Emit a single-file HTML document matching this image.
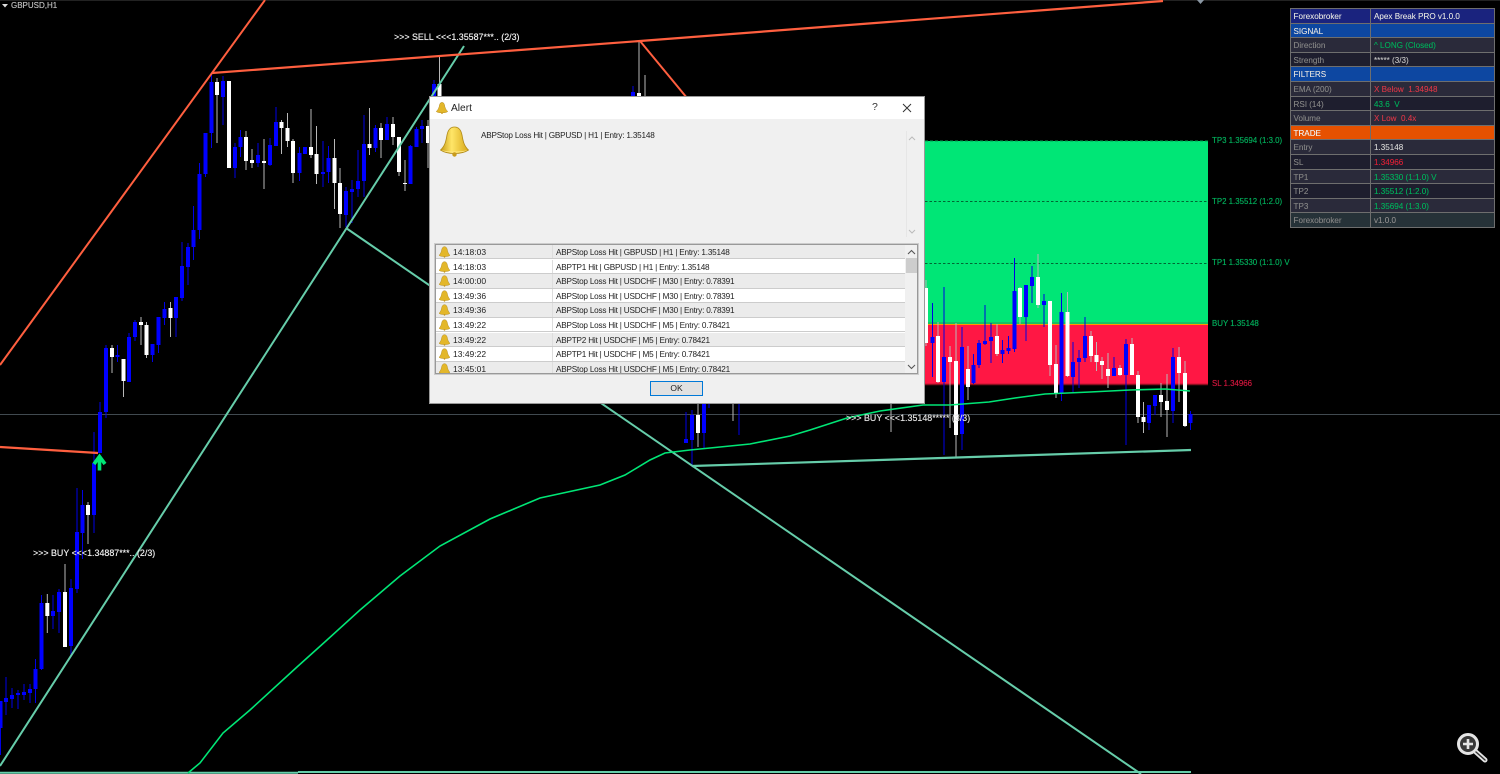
<!DOCTYPE html>
<html><head><meta charset="utf-8"><title>GBPUSD,H1</title>
<style>
html,body{margin:0;padding:0;background:#000;width:1500px;height:774px;overflow:hidden;font-family:"Liberation Sans",sans-serif}
#wrap{position:relative;width:1500px;height:774px;overflow:hidden;filter:blur(.35px)}
.abs{position:absolute;white-space:nowrap}
.lb{position:absolute;white-space:nowrap;font-size:7.9px;line-height:10px;text-shadow:0 0 .4px currentColor}
.lb.w{font-size:8.9px}
.pn{position:absolute;left:1290px;top:8px;width:205px;height:220px;background:#6e6e6e;font-size:8.1px;text-shadow:0 0 .3px currentColor}
.r{position:absolute;left:1px;width:203px;height:13.7px;line-height:15px}
.r b{font-weight:normal;position:absolute;top:0;height:13.7px;padding-left:2.5px;box-sizing:border-box;overflow:hidden}
.r b:first-child{left:0;width:79px}.r b:last-child{left:80px;width:123px;padding-left:3px}
.dlg{position:absolute;left:430px;top:97px;width:494px;height:306px;background:#f0f0f0;box-shadow:0 0 0 1px #999;color:#222}
.ttl{position:absolute;left:0;top:0;width:494px;height:22px;background:#fff}
.list{position:absolute;left:5px;top:147px;width:483px;height:130px;background:#fff;box-sizing:border-box;border:1px solid #999;box-shadow:0 0 0 1px #ccc;overflow:hidden}
.row{position:absolute;left:0;width:469px;height:13.4px;border-bottom:1.2px solid #ccc;font-size:8.5px;line-height:15px}
.row.a{background:#ebebeb}.row.b{background:#fff}
.row i{font-style:normal;position:absolute;left:17px}.row u{text-decoration:none;position:absolute;left:120px;font-size:8.2px;letter-spacing:-.21px}
.row s{position:absolute;left:115.5px;top:0;bottom:0;width:1px;background:#ddd}
.row svg{position:absolute;left:3px;top:1px}
</style></head><body><div id="wrap">
<svg class="abs" style="left:0;top:0" width="1500" height="774" viewBox="0 0 1500 774" fill="none">
<rect x="0" y="0" width="1500" height="1" fill="#222"/>
<rect x="925" y="141" width="283" height="183" fill="#00e676"/>
<rect x="925" y="324" width="283" height="61" fill="#ff1744"/>
<path d="M925 141H1208" stroke="#00a050" stroke-width="1" stroke-dasharray="3 2"/>
<path d="M925 201.5H1208M925 263.5H1208" stroke="#063" stroke-width="1" stroke-dasharray="2.5 2"/>
<path d="M925 323H1208" stroke="#2f9a50" stroke-width="1"/><path d="M925 324.5H1208" stroke="#ff9800" stroke-width="1"/>
<path d="M925 384.5H1208" stroke="#8a1020" stroke-width="1.5"/>
<path d="M0 414.5H1500" stroke="#414a50" stroke-width="1"/>
<path stroke="#0000e6" stroke-width="1" d="M0.5 701V755M6 677V715M12 688V708M18 690V709M24 684V700M30 684V703M35.5 659V703M41.5 595V670M53 595V629M59 589V633M71 579V656M77 488V593M82.5 490V559M94 432V533M100 402V453M106 345V418M117.5 345V362M129 333V382M135 320V341M152.5 344V362M158.5 317V353M164.5 302V325M176 297V337M182 242V301M188 243V285M193.5 206V260M199.5 163V239M205.5 133V177M211.5 73V148M223 76V125M235 143V178M240.5 130V157M258 143V167M270 138V166M276 107V146M299.5 147V181M323 141V187M328.5 146V183M346 187V227M352 180V223M358 150V197M364 115V197M375.5 125V152M387 117V140M410.5 145V184M416.5 127V147M422 120V143M434 80V100M633 86V100M686 412V442M692 410V467M704 403V448M709 403V408M739 403V435M932.5 303V377M944 287V455M962 327V450M973.5 354V384M979 340V368M985 305V345M991 323V363M1002.5 340V363M1008.5 336V354M1014.5 258V352M1026 285V341M1032 266V303M1044 294V327M1061.5 293V401M1073 342V392M1079 350V388M1085 317V362M1114 357V376M1126 339V445M1149 405V430M1155 395V415M1173 348V423M1190.5 411V430"/>
<path stroke="#b8b8b8" stroke-width="1" d="M47.3 594V633M65 564V647M88 502V544M112 345V373M123.5 359V397M141 317V345M146.5 322V358M170.5 302V337M217 78V143M246 131V170M252 149V168M264 139V189M281.5 120V154M287.5 113V147M293 139V183M311 109V158M316.5 126V184M334.5 139V209M340 168V228M369.5 108V155M381 123V158M393 117V145M399 137V176M405 160V191M428 120V168M439.5 57V100M639 41V100M645 75V100M698 403V447M733 403V421M891 403V432M926 280V346M938 322V383M950 346V428M956 323V457M968 346V400M997 324V356M1020 287V324M1038 254V308M1050 301V376M1056 345V398M1067.5 292V377M1091 331V362M1096.5 342V371M1102 357V379M1108 353V388M1120 365V376M1132 338V375M1138 371V423M1143.5 402V433M1161 383V417M1167 374V437M1179 347V402M1185 361V427"/>
<path stroke="#0000ff" stroke-width="4" d="M0.5 701V728M6 698V702M12 695V699M18 693V695M24 692V695M30 689V693M35.5 669V689M41.5 603V669M53 611V616M59 592V612M71 588V646M77 532V589M82.5 505V533M94 463V515M100 412V453M106 348V412M117.5 355V357M129 337V382M135 322V337M152.5 344V355M158.5 317V345M164.5 309V318M176 297V318M182 266V298M188 247V267M193.5 230V247M199.5 174V230M205.5 133V174M211.5 82V133M223 81V97M235 147V168M240.5 137V147M258 155V163M270 145V165M276 122V146M299.5 153V173M305 147V154M323 172V174M328.5 158V172M346 191V215M352 189V192M358 181V189M364 144V181M375.5 128V148M387 124V140M410.5 146V184M416.5 129V147M422 126V129M434 84V100M633 92V100M686 439V443M692 415V440M704 403V433M932.5 337V343M944 357V382M962 347V434M973.5 365V383M979 343V365M985 341V344M991 337V341M1002.5 350V354M1008.5 348V351M1014.5 291V349M1026 285V317M1032 277V286M1044 301V305M1061.5 312V393M1073 362V377M1079 358V362M1085 336V358M1114 368V376M1126 344V375M1149 405V423M1155 395V406M1173 357V411M1190.5 414V423"/>
<path stroke="#ffffff" stroke-width="4" d="M47.3 603V616M65 592V647M88 505V515M112 348V357M123.5 359V381M141 322V325M146.5 325V355M170.5 308V318M217 82V95M229 81V168M246 137V161M252 160V163M264 161V163M281.5 122V128M287.5 128V141M293 141V173M311 147V155M316.5 154V174M334.5 158V183M340 183V214M369.5 144V148M381 128V140M393 124V137M399 137V172M405 183V184M428 126V143M439.5 84V100M639 93V100M698 415V433M926 288V343M938 336V382M950 357V362M956 361V435M968 369V387M997 336V354M1020 288V317M1038 277V305M1050 301V365M1056 364V393M1067.5 312V376M1091 336V356M1096.5 355V362M1102 361V365M1108 369V376M1120 368V375M1132 344V375M1138 375V417M1143.5 417V422M1161 395V402M1167 401V410M1179 357V373M1185 373V426"/>
<g stroke-width="2">
<path stroke="#66cdaa" d="M0 766L464 46M346 228L1141 774"/>
<path stroke="#66cdaa" stroke-width="2.2" d="M692 466L1191 450"/>
<path stroke="#66cdaa" stroke-width="2" d="M0 772.7H298M298 772H1191"/>
<path stroke="#ff5f3f" d="M0 365L265 0"/>
<path stroke="#ff5f3f" stroke-width="2.2" d="M212 73L640 41L1163 1"/>
<path stroke="#ff5f3f" d="M640 41L692 104"/>
<path stroke="#ff5f3f" stroke-width="2.2" d="M0 447L98 453"/>
<path stroke="#00e676" stroke-width="1.6" d="M188 773L200 763L223 733L250 710L297 667L327 640L360 610L400 576L440 546L490 519L540 498L600 485L625 475L650 460L665 453L690 450L700 449L750 444L790 436L810 430L847 418L880 411L923 405L950 405L989 402L1015 398L1045 394L1090 392L1130 390L1165 389L1190 391"/>
</g>
<path d="M94 464L99.500 456.500L105 464M99.500 457V470.500" stroke="#00e676" stroke-width="3.600" fill="none"/>
<path d="M2 4H8L5 7.500Z" fill="#ddd"/>
<path d="M1197 0H1204L1200.500 4Z" fill="#8a97a3"/>
<circle cx="1468" cy="744" r="9.500" fill="#383838" stroke="#e5e5e5" stroke-width="3"/>
<path d="M1476 752L1485 760" stroke="#e5e5e5" stroke-width="5" stroke-linecap="round"/>
<path d="M1476 752L1485 760" stroke="#333" stroke-width="1.500" stroke-linecap="round"/>
<path d="M1468 739V749M1463 744H1473" stroke="#e5e5e5" stroke-width="2.600"/>
</svg>

<div class="lb" style="left:11px;top:1px;color:#bbb;font-size:8px">GBPUSD,H1</div>
<div class="lb w" style="left:394px;top:32px;color:#eee">&gt;&gt;&gt; SELL &lt;&lt;&lt;1.35587***.. (2/3)</div>
<div class="lb w" style="left:33px;top:548px;color:#eee">&gt;&gt;&gt; BUY &lt;&lt;&lt;1.34887***.. (2/3)</div>
<div class="lb w" style="left:846px;top:413px;color:#e0e0e0">&gt;&gt;&gt; BUY &lt;&lt;&lt;1.35148***** (3/3)</div>
<div class="lb" style="left:1212px;top:136px;color:#00a958">TP3 1.35694 (1:3.0)</div>
<div class="lb" style="left:1212px;top:197px;color:#00a958">TP2 1.35512 (1:2.0)</div>
<div class="lb" style="left:1212px;top:258px;color:#00a958">TP1 1.35330 (1:1.0) V</div>
<div class="lb" style="left:1212px;top:319px;color:#00a958">BUY 1.35148</div>
<div class="lb" style="left:1212px;top:379px;color:#c8153a">SL 1.34966</div>

<div class="pn">
<div class="r" style="top:1px;color:#ddd"><b style="background:#1a237e">Forexobroker</b><b style="background:#1a237e">Apex Break PRO v1.0.0</b></div>
<div class="r" style="top:15.6px;color:#ddd"><b style="background:#0d47a1">SIGNAL</b><b style="background:#0d47a1"></b></div>
<div class="r" style="top:30.200px"><b style="background:#2a2a3a;color:#808080">Direction</b><b style="background:#2a2a3a;color:#00a958">^ LONG (Closed)</b></div>
<div class="r" style="top:44.800px"><b style="background:#1e1e2e;color:#808080">Strength</b><b style="background:#1e1e2e;color:#bbb">***** (3/3)</b></div>
<div class="r" style="top:59.400px;color:#ddd"><b style="background:#0d47a1">FILTERS</b><b style="background:#0d47a1"></b></div>
<div class="r" style="top:74px"><b style="background:#2a2a3a;color:#808080">EMA (200)</b><b style="background:#2a2a3a;color:#d03545">X Below&nbsp; 1.34948</b></div>
<div class="r" style="top:88.600px"><b style="background:#1e1e2e;color:#808080">RSI (14)</b><b style="background:#1e1e2e;color:#00a958">43.6&nbsp; V</b></div>
<div class="r" style="top:103.200px"><b style="background:#2a2a3a;color:#808080">Volume</b><b style="background:#2a2a3a;color:#d03545">X Low&nbsp; 0.4x</b></div>
<div class="r" style="top:117.800px;color:#eee"><b style="background:#e65100">TRADE</b><b style="background:#e65100"></b></div>
<div class="r" style="top:132.400px"><b style="background:#2a2a3a;color:#808080">Entry</b><b style="background:#2a2a3a;color:#ccc">1.35148</b></div>
<div class="r" style="top:147px"><b style="background:#1e1e2e;color:#808080">SL</b><b style="background:#1e1e2e;color:#d02035">1.34966</b></div>
<div class="r" style="top:161.600px"><b style="background:#2a2a3a;color:#808080">TP1</b><b style="background:#2a2a3a;color:#00a958">1.35330 (1:1.0) V</b></div>
<div class="r" style="top:176.200px"><b style="background:#1e1e2e;color:#808080">TP2</b><b style="background:#1e1e2e;color:#00a958">1.35512 (1:2.0)</b></div>
<div class="r" style="top:190.800px"><b style="background:#2a2a3a;color:#808080">TP3</b><b style="background:#2a2a3a;color:#00a958">1.35694 (1:3.0)</b></div>
<div class="r" style="top:205.400px"><b style="background:#263238;color:#808080">Forexobroker</b><b style="background:#263238;color:#888">v1.0.0</b></div>
</div>

<div class="dlg">
<div class="ttl">
<svg class="abs" style="left:6px;top:5px" width="12" height="12" viewBox="0 0 28 29"><path d="M14 1C17 1 19 3 20 7C21 13 23 19 28 23C24 26 19 26 14 26C9 26 4 26 0 23C5 19 7 13 8 7C9 3 11 1 14 1Z" fill="#e3b72a" stroke="#a67c12"/><circle cx="14" cy="27" r="2" fill="#c89a1a"/></svg>
<div class="abs" style="left:21px;top:5px;font-size:10.200px;line-height:13px;color:#222">Alert</div>
<div class="abs" style="left:442px;top:4px;font-size:10.500px;line-height:13px;color:#333">?</div>
<svg class="abs" style="left:472px;top:6px" width="10" height="10" viewBox="0 0 10 10"><path d="M1 1L9 9M9 1L1 9" stroke="#333" stroke-width="1"/></svg>
</div>
<svg class="abs" style="left:10px;top:29px" width="29" height="31" viewBox="0 0 29 31">
<defs><linearGradient id="g" x1="0" x2="1" y1="0" y2="0"><stop offset="0" stop-color="#c69a14"/><stop offset=".4" stop-color="#ffe668"/><stop offset="1" stop-color="#d8a818"/></linearGradient></defs>
<path d="M14.500 1C19 1 21 4 22 9C23 15 24 20 28.500 24C24 27 19 27.500 14.500 27.500C10 27.500 5 27 .5 24C5 20 6 15 7 9C8 4 10 1 14.500 1Z" fill="url(#g)" stroke="#b08a18" stroke-width=".8"/>
<path d="M1.500 24C6 26 23 26 27.500 24C24 27.500 5 27.500 1.500 24Z" fill="#ffe680"/>
<circle cx="14.500" cy="28.500" r="2.200" fill="#c99c1c"/></svg>
<div class="abs" style="left:51px;top:33px;font-size:8.200px;letter-spacing:-.21px;line-height:12px;color:#222">ABPStop Loss Hit | GBPUSD | H1 | Entry: 1.35148</div>
<div class="abs" style="left:476px;top:34px;width:1px;height:106px;background:#e6e6e6"></div>
<svg class="abs" style="left:478px;top:38px" width="8" height="100" viewBox="0 0 8 100" fill="none"><path d="M1 5L4 2L7 5" stroke="#bbb"/><path d="M1 95L4 98L7 95" stroke="#bbb"/></svg>
<div class="list">
<div class="row a" style="top:0"><svg width="11" height="12" viewBox="0 0 28 29"><path d="M14 1C18 1 20 4 21 8C22 14 24 19 28 23C24 26 19 26 14 26C9 26 4 26 0 23C4 19 6 14 7 8C8 4 10 1 14 1Z" fill="#e3b72a" stroke="#a67c12"/><circle cx="14" cy="27" r="2" fill="#c89a1a"/></svg><i>14:18:03</i><s></s><u>ABPStop Loss Hit | GBPUSD | H1 | Entry: 1.35148</u></div>
<div class="row b" style="top:14.600px"><svg width="11" height="12" viewBox="0 0 28 29"><path d="M14 1C18 1 20 4 21 8C22 14 24 19 28 23C24 26 19 26 14 26C9 26 4 26 0 23C4 19 6 14 7 8C8 4 10 1 14 1Z" fill="#e3b72a" stroke="#a67c12"/><circle cx="14" cy="27" r="2" fill="#c89a1a"/></svg><i>14:18:03</i><s></s><u>ABPTP1 Hit | GBPUSD | H1 | Entry: 1.35148</u></div>
<div class="row a" style="top:29.200px"><svg width="11" height="12" viewBox="0 0 28 29"><path d="M14 1C18 1 20 4 21 8C22 14 24 19 28 23C24 26 19 26 14 26C9 26 4 26 0 23C4 19 6 14 7 8C8 4 10 1 14 1Z" fill="#e3b72a" stroke="#a67c12"/><circle cx="14" cy="27" r="2" fill="#c89a1a"/></svg><i>14:00:00</i><s></s><u>ABPStop Loss Hit | USDCHF | M30 | Entry: 0.78391</u></div>
<div class="row b" style="top:43.800px"><svg width="11" height="12" viewBox="0 0 28 29"><path d="M14 1C18 1 20 4 21 8C22 14 24 19 28 23C24 26 19 26 14 26C9 26 4 26 0 23C4 19 6 14 7 8C8 4 10 1 14 1Z" fill="#e3b72a" stroke="#a67c12"/><circle cx="14" cy="27" r="2" fill="#c89a1a"/></svg><i>13:49:36</i><s></s><u>ABPStop Loss Hit | USDCHF | M30 | Entry: 0.78391</u></div>
<div class="row a" style="top:58.400px"><svg width="11" height="12" viewBox="0 0 28 29"><path d="M14 1C18 1 20 4 21 8C22 14 24 19 28 23C24 26 19 26 14 26C9 26 4 26 0 23C4 19 6 14 7 8C8 4 10 1 14 1Z" fill="#e3b72a" stroke="#a67c12"/><circle cx="14" cy="27" r="2" fill="#c89a1a"/></svg><i>13:49:36</i><s></s><u>ABPStop Loss Hit | USDCHF | M30 | Entry: 0.78391</u></div>
<div class="row b" style="top:73px"><svg width="11" height="12" viewBox="0 0 28 29"><path d="M14 1C18 1 20 4 21 8C22 14 24 19 28 23C24 26 19 26 14 26C9 26 4 26 0 23C4 19 6 14 7 8C8 4 10 1 14 1Z" fill="#e3b72a" stroke="#a67c12"/><circle cx="14" cy="27" r="2" fill="#c89a1a"/></svg><i>13:49:22</i><s></s><u>ABPStop Loss Hit | USDCHF | M5 | Entry: 0.78421</u></div>
<div class="row a" style="top:87.600px"><svg width="11" height="12" viewBox="0 0 28 29"><path d="M14 1C18 1 20 4 21 8C22 14 24 19 28 23C24 26 19 26 14 26C9 26 4 26 0 23C4 19 6 14 7 8C8 4 10 1 14 1Z" fill="#e3b72a" stroke="#a67c12"/><circle cx="14" cy="27" r="2" fill="#c89a1a"/></svg><i>13:49:22</i><s></s><u>ABPTP2 Hit | USDCHF | M5 | Entry: 0.78421</u></div>
<div class="row b" style="top:102.200px"><svg width="11" height="12" viewBox="0 0 28 29"><path d="M14 1C18 1 20 4 21 8C22 14 24 19 28 23C24 26 19 26 14 26C9 26 4 26 0 23C4 19 6 14 7 8C8 4 10 1 14 1Z" fill="#e3b72a" stroke="#a67c12"/><circle cx="14" cy="27" r="2" fill="#c89a1a"/></svg><i>13:49:22</i><s></s><u>ABPTP1 Hit | USDCHF | M5 | Entry: 0.78421</u></div>
<div class="row a" style="top:116.800px"><svg width="11" height="12" viewBox="0 0 28 29"><path d="M14 1C18 1 20 4 21 8C22 14 24 19 28 23C24 26 19 26 14 26C9 26 4 26 0 23C4 19 6 14 7 8C8 4 10 1 14 1Z" fill="#e3b72a" stroke="#a67c12"/><circle cx="14" cy="27" r="2" fill="#c89a1a"/></svg><i>13:45:01</i><s></s><u>ABPStop Loss Hit | USDCHF | M5 | Entry: 0.78421</u></div>
<div class="abs" style="left:469px;top:0;width:12px;height:128px;background:#f0f0f0"></div>
<div class="abs" style="left:470px;top:13px;width:11px;height:15px;background:#cdcdcd"></div>
<svg class="abs" style="left:471px;top:3px" width="9" height="123" viewBox="0 0 9 123" fill="none"><path d="M1 6L4.500 2.500L8 6" stroke="#555" stroke-width="1.100"/><path d="M1 117L4.500 120.500L8 117" stroke="#555" stroke-width="1.100"/></svg>
</div>
<div class="abs" style="left:220px;top:284px;width:53px;height:15px;box-sizing:border-box;border:1.500px solid #0078d7;background:#e1e1e1;text-align:center;font-size:8.500px;line-height:12px;color:#222">OK</div>
</div>
</div></body></html>
